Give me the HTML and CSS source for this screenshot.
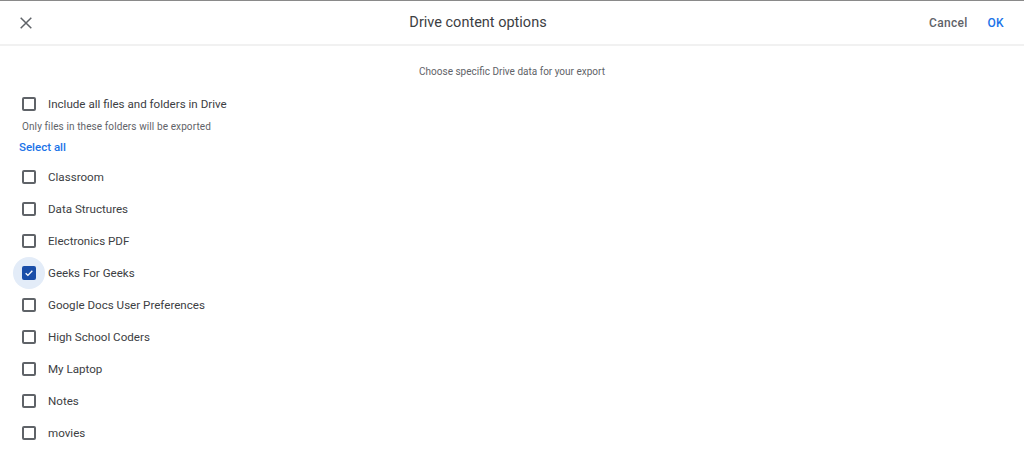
FILE: index.html
```html
<!DOCTYPE html>
<html>
<head>
<meta charset="utf-8">
<link rel="stylesheet" href="styles.css">
</head>
<body>
<div class="topline"></div>
<header class="header">
  <button class="close" aria-label="Close">
    <svg width="12" height="12" viewBox="0 0 12 12"><path d="M0.7 0.7L11.3 11.3M11.3 0.7L0.7 11.3" stroke="#5f6368" stroke-width="1.5" fill="none"/></svg>
  </button>
  <div class="title">Drive content options</div>
  <div class="actions">
    <span class="cancel">Cancel</span>
    <span class="ok">OK</span>
  </div>
</header>
<main class="content">
  <p class="subtitle">Choose specific Drive data for your export</p>
  <label class="row first"><span class="hit"><span class="box"></span></span><span class="label">Include all files and folders in Drive</span></label>
  <p class="hint">Only files in these folders will be exported</p>
  <a class="select-all">Select all</a>
  <ul class="list">
    <li class="row"><span class="hit"><span class="box"></span></span><span class="label">Classroom</span></li>
    <li class="row"><span class="hit"><span class="box"></span></span><span class="label">Data Structures</span></li>
    <li class="row"><span class="hit"><span class="box"></span></span><span class="label">Electronics PDF</span></li>
    <li class="row checked"><span class="hit"><span class="box"><svg width="12" height="12" viewBox="0 0 12 12"><path d="M2 6.2L4.7 8.9L10 3.4" stroke="#fff" stroke-width="1.6" fill="none"/></svg></span></span><span class="label">Geeks For Geeks</span></li>
    <li class="row"><span class="hit"><span class="box"></span></span><span class="label">Google Docs User Preferences</span></li>
    <li class="row"><span class="hit"><span class="box"></span></span><span class="label">High School Coders</span></li>
    <li class="row"><span class="hit"><span class="box"></span></span><span class="label">My Laptop</span></li>
    <li class="row"><span class="hit"><span class="box"></span></span><span class="label">Notes</span></li>
    <li class="row"><span class="hit"><span class="box"></span></span><span class="label">movies</span></li>
  </ul>
</main>
</body>
</html>
```
FILE: styles.css
```css
* { box-sizing: border-box; }
html, body { margin: 0; padding: 0; background: #fff; }
body { font-family: Roboto, "Noto Sans", Arial, sans-serif; color: #3c4043; width: 1024px; height: 466px; overflow: hidden; }
.topline { height: 1px; background: #8a8a8a; }
.header { height: 45px; display: flex; align-items: center; border-bottom: 2px solid #f1f1f1; }
.close { width: 51px; height: 44px; border: 0; background: none; padding: 0; display: flex; align-items: center; justify-content: center; }
.title { flex: 1; text-align: center; font-size: 14.5px; color: #3c4043; padding-right: 24px; }
.actions { display: flex; align-items: center; gap: 20px; padding-right: 20px; font-size: 12px; font-weight: 500; letter-spacing: 0.3px; }
.cancel { color: #5f6368; }
.ok { color: #1a73e8; }
.content { padding: 0 0 0 13px; }
.subtitle { margin: 20px 0 0; text-align: center; font-size: 10px; color: #5f6368; padding-right: 13px; }
.row { display: flex; align-items: center; height: 32px; }
.row.first { margin-top: 11px; }
.hit { width: 32px; height: 32px; border-radius: 50%; flex: none; display: flex; align-items: center; justify-content: center; }
.checked .hit { background: #e3ecf8; }
.box { width: 14px; height: 14px; border: 2px solid #5f6368; border-radius: 2px; display: flex; align-items: center; justify-content: center; }
.label { margin-left: 3px; font-size: 11.6px; color: #3c4043; }
.hint { margin: 1px 0 0 9px; font-size: 10px; color: #5f6368; letter-spacing: 0.1px; }
.select-all { display: block; margin: 8px 0 0 6px; font-size: 11.5px; font-weight: 500; color: #1a73e8; }
.list { list-style: none; margin: 7px 0 0; padding: 0; }
.checked .box { background: #1a4ea8; border-color: #1a4ea8; }
```
